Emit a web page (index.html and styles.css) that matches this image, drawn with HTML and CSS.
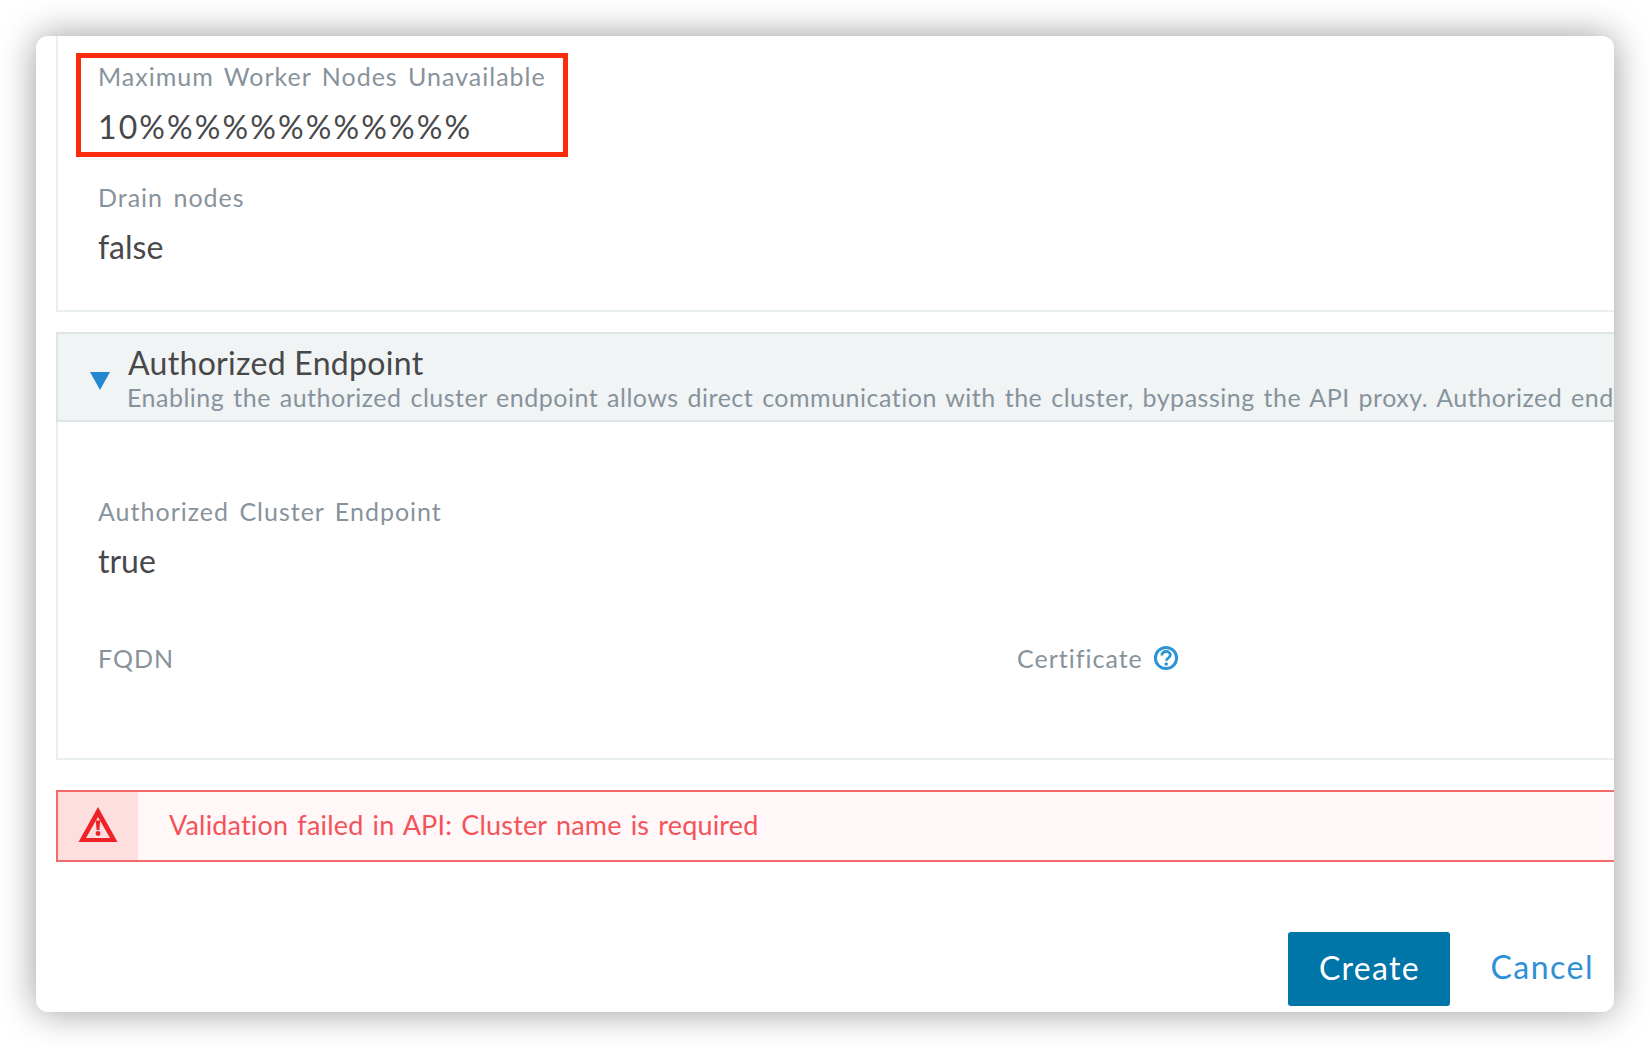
FILE: index.html
```html
<!DOCTYPE html>
<html>
    <head>
        <title>Create Cluster</title>
        <link rel="stylesheet" href="styles.css">
    </head>
    <body>
        <div class="window">
            <div class="panel panel-top">
                <div class="field highlighted">
                    <div class="label">Maximum Worker Nodes Unavailable</div>
                    <div class="value percent">10%%%%%%%%%%%%</div>
                </div>
                <div class="field drain">
                    <div class="label">Drain nodes</div>
                    <div class="value">false</div>
                </div>
            </div>

            <div class="panel panel-endpoint">
                <div class="section-head">
                    <span class="caret"></span>
                    <div class="section-text">
                        <h2>Authorized Endpoint</h2>
                        <p>Enabling the authorized cluster endpoint allows direct communication with the cluster, bypassing the API proxy. Authorized endpoint</p>
                    </div>
                </div>
                <div class="field cluster-endpoint">
                    <div class="label">Authorized Cluster Endpoint</div>
                    <div class="value">true</div>
                </div>
                <div class="row">
                    <div class="label col col-first">FQDN</div>
                    <div class="label col">
                        Certificate
                        <svg class="help" width="26" height="26" viewBox="0 0 26 26">
                            <circle cx="13" cy="13" r="10.6" fill="none" stroke="#2f93d8" stroke-width="3"/>
                            <path d="M8.800 10.400c0-2.400 1.900-3.900 4.300-3.900s4.200 1.400 4.200 3.500c0 1.600-1 2.400-2.200 3.100-1.100.7-1.700 1.300-1.700 2.700" fill="none" stroke="#2f93d8" stroke-width="2.800"/>
                            <circle cx="13.200" cy="19" r="1.800" fill="#2f93d8"/>
                        </svg>
                    </div>
                </div>
            </div>

            <div class="alert">
                <div class="alert-icon">
                    <svg width="40" height="38" viewBox="0 0 40 38">
                        <path d="M20 1L39.500 36H.5z" fill="#ee2227"/>
                        <path d="M20 11L32 32H8z" fill="#fddfe0"/>
                        <path d="M17.800 14.500h4.400l-.8 9.500h-2.800z" fill="#ee2227"/>
                        <circle cx="20" cy="27.500" r="2.400" fill="#ee2227"/>
                    </svg>
                </div>
                <div class="alert-text">Validation failed in API: Cluster name is required</div>
            </div>

            <div class="actions">
                <button class="btn-create">Create</button>
                <a class="btn-cancel" href="#">Cancel</a>
            </div>
        </div>
    </body>
</html>
```

FILE: styles.css
```css
* {
    box-sizing: border-box;
}

body {
    margin: 0;
    padding: 36px;
    height: 1048px;
    overflow: hidden;
    background: #fff;
    font-family: "Lato", "Open Sans", sans-serif;
}

.window {
    width: 1578px;
    height: 976px;
    padding-left: 20px;
    background: #fff;
    border-radius: 12px;
    overflow: hidden;
    box-shadow: 0 0 36px rgba(0, 0, 0, .4);
}

.panel {
    width: 1700px;
    border: 2px solid #e9eeef;
}

.panel-top {
    height: 276px;
    padding-top: 17px;
    border-top: 0;
}

.label {
    color: #87939c;
    font-size: 25px;
    line-height: 32px;
    letter-spacing: 1px;
    word-spacing: 3px;
}

.value {
    color: #48484a;
    font-size: 32px;
    line-height: 38px;
    margin-top: 15px;
}

.percent {
    margin-top: 16px;
    letter-spacing: 2.1px;
}

.field {
    margin-left: 40px;
}

.highlighted {
    width: 492px;
    height: 104px;
    margin-left: 18px;
    padding: 2px 0 0 17px;
    border: 5px solid #fb2c0c;
}

.drain {
    margin-top: 24px;
}

.panel-endpoint {
    height: 428px;
    margin-top: 20px;
    border-top: 0;
}

.section-head {
    display: flex;
    align-items: center;
    width: 100%;
    height: 90px;
    margin-left: -2px;
    padding-left: 32px;
    background: #f1f4f5;
    border: 2px solid #dde5e6;
}

.caret {
    width: 0;
    height: 0;
    margin: 8px 17px 0 0;
    border-left: 10px solid transparent;
    border-right: 10px solid transparent;
    border-top: 18px solid #2488d0;
}

.section-text {
    white-space: nowrap;
}

.section-text h2 {
    margin: 0 0 0 1px;
    color: #48484a;
    font-size: 32px;
    font-weight: 400;
    line-height: 38px;
    padding-top: 2px;
    letter-spacing: .3px;
}

.section-text p {
    margin: 0;
    color: #87939c;
    font-size: 25px;
    line-height: 30px;
    letter-spacing: .5px;
    word-spacing: 2px;
}

.cluster-endpoint {
    margin-top: 73px;
}

.row {
    display: flex;
    margin: 62px 0 0 40px;
}

.col {
    display: flex;
    align-items: center;
    gap: 10px;
}

.col-first {
    width: 919px;
}

.alert {
    display: flex;
    align-items: center;
    width: 1700px;
    height: 72px;
    margin-top: 30px;
    background: #fff7f8;
    border: 2px solid #f26a6a;
}

.alert-icon {
    display: flex;
    align-items: center;
    justify-content: center;
    width: 80px;
    height: 100%;
    padding-bottom: 2px;
    background: #fddfe0;
}

.alert-text {
    margin-left: 31px;
    padding-bottom: 3px;
    color: #f4535a;
    font-size: 27px;
    letter-spacing: .18px;
    word-spacing: 2px;
}

.actions {
    display: flex;
    align-items: center;
    justify-content: flex-end;
    width: 1538px;
    margin-top: 70px;
}

.btn-create {
    width: 162px;
    height: 74px;
    margin-right: 40px;
    padding-bottom: 5px;
    color: #fff;
    background: #0075a8;
    border: none;
    border-radius: 3px;
    font-family: inherit;
    font-size: 32px;
    letter-spacing: 1.300px;
}

.btn-cancel {
    padding-bottom: 5px;
    color: #2f8fd6;
    font-size: 32px;
    letter-spacing: 1.500px;
    text-decoration: none;
}
```
